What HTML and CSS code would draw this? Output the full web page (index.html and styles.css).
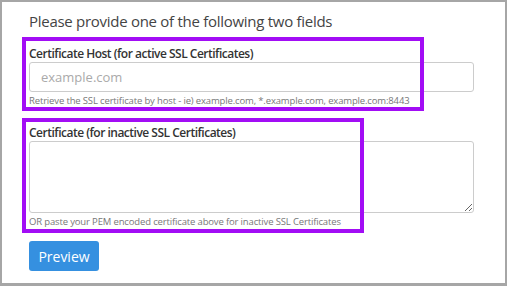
FILE: index.html
```html
<!DOCTYPE html>
<html lang="en">
  <head>
    <meta charset="UTF-8" />
    <meta name="viewport" content="width=device-width, initial-scale=1.0" />
    <title>SSL Certificate</title>
    <link rel="stylesheet" href="styles.css">
  </head>
  <body>
    <div class="panel">
      <h2 class="title">Please provide one of the following two fields</h2>

      <div class="field">
        <label for="host">Certificate Host (for active SSL Certificates)</label>
        <input id="host" type="text" placeholder="example.com" />
        <p class="help">Retrieve the SSL certificate by host - ie) example.com, *.example.com, example.com:8443</p>
      </div>

      <div class="field">
        <label for="cert">Certificate (for inactive SSL Certificates)</label>
        <textarea id="cert"></textarea>
        <p class="help">OR paste your PEM encoded certificate above for inactive SSL Certificates</p>
      </div>

      <button class="preview">Preview</button>

      <!-- annotation highlights -->
      <div class="mark mark-host"></div>
      <div class="mark mark-cert"></div>
    </div>
  </body>
</html>
```

FILE: styles.css
```css
* {
  box-sizing: border-box;
}

body {
  margin: 0;
  font-family: "Open Sans", sans-serif;
  color: #333;
  background: #fff;
}

.panel {
  position: relative;
  width: 507px;
  height: 286px;
  border: 2px solid #a6a6a6;
  border-bottom-width: 3px;
  padding: 0 31px 0 27px;
  background: #fff;
}

.title {
  margin: 0;
  padding-top: 9px;
  font-size: 15px;
  font-weight: 400;
  line-height: 20px;
  letter-spacing: -0.28px;
  color: #444;
}

.field {
  display: flex;
  flex-direction: column;
}

.field:first-of-type {
  margin-top: 15px;
}

.field + .field {
  margin-top: 17px;
}

label {
  font-size: 12px;
  font-weight: 600;
  line-height: 16px;
  letter-spacing: -0.5px;
  color: #333;
}

input,
textarea {
  width: 100%;
  border: 1px solid #ccc;
  border-radius: 3px;
  font-family: "Open Sans", sans-serif;
  font-size: 13px;
  color: #555;
  background: #fff;
}

input {
  height: 30px;
  padding: 0 11px;
}

input::placeholder {
  color: #aaa;
}

textarea {
  height: 72px;
  padding: 6px 11px;
  resize: vertical;
}

.help {
  margin: 2px 0 0;
  font-size: 9.5px;
  line-height: 14px;
  letter-spacing: -0.15px;
  color: #777;
}

.preview {
  margin-top: 12px;
  width: 70px;
  height: 30px;
  border: none;
  border-radius: 3px;
  background: #3590e0;
  color: #fff;
  font-family: "Open Sans", sans-serif;
  font-size: 14px;
  cursor: pointer;
}

.mark {
  position: absolute;
  border: 4px solid #a20df5;
  pointer-events: none;
}

.mark-host {
  left: 20px;
  top: 35px;
  width: 402px;
  height: 74px;
}

.mark-cert {
  left: 20px;
  top: 116px;
  width: 342px;
  height: 115px;
}
```
